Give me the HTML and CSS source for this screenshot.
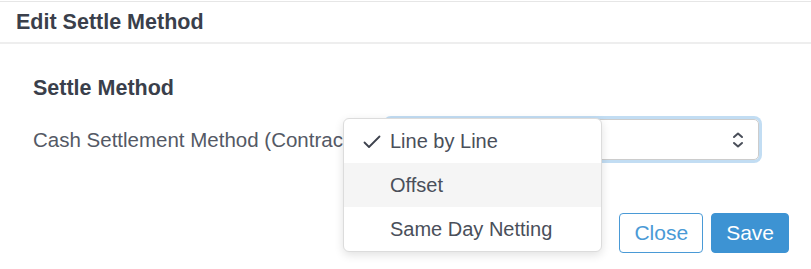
FILE: index.html
```html
<!DOCTYPE html>
<html>
<head lang="en">
    <meta charset="UTF-8">
    <title>Edit Settle Method</title>
    <link rel="stylesheet" href="styles.css">
</head>
<body>

<div class="modal">
    <div class="modal-header">
        <h4 class="modal-title">Edit Settle Method</h4>
    </div>

    <div class="modal-body">
        <h5 class="section-title">Settle Method</h5>

        <div class="form-row">
            <label class="form-label">Cash Settlement Method (Contract)</label>

            <div class="select-wrap">
                <div class="select focused">
                    <span class="select-value">Line by Line</span>
                    <svg class="select-arrows" width="12" height="18" viewBox="0 0 12 18">
                        <path d="M2 6 L6 2.5 L10 6" fill="none" stroke="#4a4f5a" stroke-width="2" stroke-linecap="round" stroke-linejoin="round"/>
                        <path d="M2 12 L6 15.5 L10 12" fill="none" stroke="#4a4f5a" stroke-width="2" stroke-linecap="round" stroke-linejoin="round"/>
                    </svg>
                </div>

                <ul class="menu">
                    <li class="menu-item selected">
                        <svg class="check" width="18" height="14" viewBox="0 0 18 14">
                            <path d="M1.5 7.5 L6 12 L16.5 1.5" fill="none" stroke="#3d424d" stroke-width="1.8" stroke-linecap="round" stroke-linejoin="round"/>
                        </svg>
                        Line by Line
                    </li>
                    <li class="menu-item hover">Offset</li>
                    <li class="menu-item">Same Day Netting</li>
                </ul>
            </div>
        </div>
    </div>

    <div class="modal-footer">
        <button class="btn btn-outline">Close</button>
        <button class="btn btn-primary">Save</button>
    </div>
</div>

</body>
</html>
```

FILE: styles.css
```css
body, html {
    padding: 0;
    margin: 0;
}

body {
    width: 811px;
    height: 269px;
    background: #fff;
    font-family: "Liberation Sans", Arial, sans-serif;
    overflow: hidden;
}

.modal {
    margin-top: 1px;
    border-top: 1px solid #e6e6e6;
}

.modal-header {
    height: 40px;
    border-bottom: 2px solid #eeeeee;
    display: flex;
    align-items: center;
    padding: 0 16px;
}

.modal-title {
    margin: 0;
    font-size: 21.5px;
    font-weight: bold;
    color: #3a3f4b;
}

.modal-body {
    padding: 32px 33px 0 33px;
}

.section-title {
    margin: 0;
    font-size: 21.5px;
    line-height: 24px;
    font-weight: bold;
    color: #3a3f4b;
}

.form-row {
    display: flex;
    align-items: center;
    margin-top: 19px;
}

.form-label {
    width: 353px;
    flex: none;
    white-space: nowrap;
    font-size: 20.5px;
    color: #545965;
}

.select-wrap {
    position: relative;
}

.select {
    box-sizing: border-box;
    width: 373px;
    height: 41px;
    border: 1px solid #cccccc;
    border-radius: 5px;
    display: flex;
    align-items: center;
    justify-content: space-between;
    padding: 0 14px;
    font-size: 20px;
    color: #4a4f5a;
}

.select.focused {
    box-shadow: 0 0 0 3px #c2ddf3;
}

.select-value {
    visibility: hidden;
}

.select-arrows {
    display: block;
}

.menu {
    position: absolute;
    left: -43px;
    top: -1px;
    width: 259px;
    margin: 0;
    padding: 0;
    list-style: none;
    background: #fff;
    border: 1px solid #dcdcdc;
    border-radius: 6px;
    box-shadow: 0 3px 10px rgba(0, 0, 0, 0.12);
    box-sizing: border-box;
    overflow: hidden;
}

.menu-item {
    position: relative;
    height: 44px;
    line-height: 44px;
    padding-left: 46px;
    font-size: 20px;
    color: #4a4f5a;
}

.menu-item.hover {
    background: #f5f5f5;
}

.menu-item .check {
    position: absolute;
    left: 19px;
    top: 16px;
}

.modal-footer {
    display: flex;
    justify-content: flex-end;
    gap: 8px;
    padding: 53px 22px 0 0;
}

.btn {
    height: 40px;
    padding: 0 14px;
    border-radius: 4px;
    font-family: "Liberation Sans", Arial, sans-serif;
    font-size: 21px;
    cursor: pointer;
}

.btn-outline {
    background: #fff;
    border: 1px solid #4a9ad6;
    color: #4a9ad6;
}

.btn-primary {
    background: #3d93d3;
    border: 1px solid #3d93d3;
    color: #fff;
}
```
